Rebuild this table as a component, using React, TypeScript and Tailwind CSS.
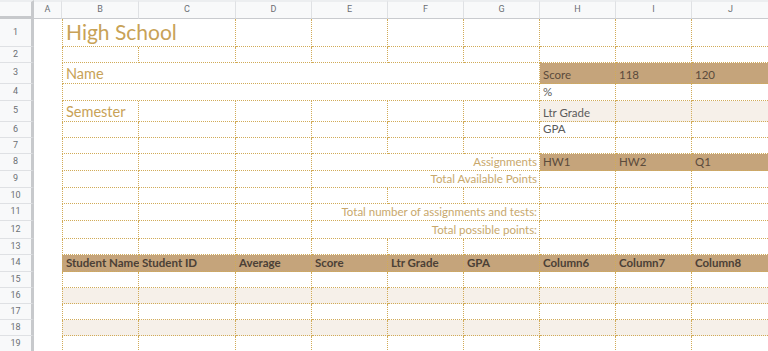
import React from 'react';

type Kind = 'title' | 'name' | 'dark' | 'right' | 'head' | 'plain';
type Cell = { span?: number; text?: string; kind?: Kind; bg?: 'tan' | 'beige' };

const empty = (n: number): Cell[] => Array.from({ length: n }, () => ({}));
const fill = (n: number, bg: 'tan' | 'beige'): Cell[] => Array.from({ length: n }, () => ({ bg }));

const rows: Cell[][] = [
  [{ span: 2, text: 'High School', kind: 'title' }, ...empty(7)],
  empty(9),
  [
    { span: 6, text: 'Name', kind: 'name' },
    { text: 'Score', kind: 'dark', bg: 'tan' },
    { text: '118', kind: 'dark', bg: 'tan' },
    { text: '120', kind: 'dark', bg: 'tan' },
  ],
  [{ span: 6 }, { text: '%', kind: 'plain' }, ...empty(2)],
  [
    { text: 'Semester', kind: 'name' },
    ...empty(5),
    { text: 'Ltr Grade', kind: 'plain', bg: 'beige' },
    ...fill(2, 'beige'),
  ],
  [...empty(6), { text: 'GPA', kind: 'plain' }, ...empty(2)],
  empty(9),
  [
    ...empty(3),
    { span: 3, text: 'Assignments', kind: 'right' },
    { text: 'HW1', kind: 'dark', bg: 'tan' },
    { text: 'HW2', kind: 'dark', bg: 'tan' },
    { text: 'Q1', kind: 'dark', bg: 'tan' },
  ],
  [...empty(3), { span: 3, text: 'Total Available Points', kind: 'right' }, ...empty(3)],
  empty(9),
  [...empty(3), { span: 3, text: 'Total number of assignments and tests:', kind: 'right' }, ...empty(3)],
  [...empty(3), { span: 3, text: 'Total possible points:', kind: 'right' }, ...empty(3)],
  empty(9),
  ['Student Name', 'Student ID', 'Average', 'Score', 'Ltr Grade', 'GPA', 'Column6', 'Column7', 'Column8'].map(
    t => ({ text: t, kind: 'head' as Kind, bg: 'tan' as const })
  ),
  empty(9),
  fill(9, 'beige'),
  empty(9),
  fill(9, 'beige'),
  empty(9),
];

const letters = ['A', 'B', 'C', 'D', 'E', 'F', 'G', 'H', 'I', 'J'];

const spanClass: Record<number, string> = {
  1: 'col-span-1',
  2: 'col-span-2',
  3: 'col-span-3',
  6: 'col-span-6',
};

const kindClass: Record<Kind, string> = {
  title: 'text-[21px] text-[#c8a257] pl-[3px] pb-[1px]',
  name: 'text-[14.5px] text-[#c8a257] pl-[3px]',
  dark: 'text-[11.5px] text-[#5b4b3b] pl-[3px] pb-[1px]',
  plain: 'text-[11.5px] text-[#5a5a5a] pl-[3px] pb-[1px]',
  right: 'text-[11.5px] text-[#c8a86c] justify-end pr-[2px] pb-[1px]',
  head: 'text-[11.5px] font-bold text-[#4b4036] pl-[3px] pb-[1px]',
};

const bgClass = { tan: 'bg-[#c5a47b]', beige: 'bg-[#f6f0e9]' };

function DataCell({ cell, first }: { cell: Cell; first: boolean }) {
  return (
    <div
      className={`flex items-end overflow-visible whitespace-nowrap leading-tight border-dotted border-[#d1ab58] border-r border-b
        ${first ? 'border-l' : ''}
        ${spanClass[cell.span ?? 1]}
        ${cell.bg ? bgClass[cell.bg] : 'bg-white'}
        ${cell.kind ? kindClass[cell.kind] : ''}`}
    >
      {cell.text}
    </div>
  );
}

export default function App() {
  return (
    <div className="w-[768px] h-[351px] overflow-hidden bg-white font-['Lato','Noto_Sans',sans-serif]">
      <div className="grid grid-cols-[34px_28px_77px_97px_76px_76px_76px_76px_76px_76px_78px] grid-rows-[19px_28px_16px_21px_17px_21px_16px_16px_17px_17px_16px_17px_18px_16px_17px_16px_16px_16px_16px_16px] w-[790px]">
        {/* Column headers */}
        <div className="bg-[#f8f9fa] border-t-2 border-t-[#eceef0] border-r-[3px] border-r-[#c7c9cc] border-b-[3px] border-b-[#c7c9cc]" />
        {letters.map(l => (
          <div
            key={l}
            className="bg-[#f8f9fa] border-t-2 border-t-[#eceef0] border-r border-r-[#dfe1e4] border-b border-b-[#c9cbcf] flex items-center justify-center text-[9px] text-[#6b6f74] font-['Roboto',sans-serif]"
          >
            {l}
          </div>
        ))}

        {rows.map((row, i) => (
          <React.Fragment key={i}>
            <div className="bg-[#f8f9fa] border-b border-b-[#dfe1e4] border-r-[3px] border-r-[#c7c9cc] flex items-center justify-center text-[9px] text-[#6b6f74] font-['Roboto',sans-serif]">
              {i + 1}
            </div>
            <div className="bg-white" />
            {row.map((cell, j) => (
              <DataCell key={j} cell={cell} first={j === 0} />
            ))}
          </React.Fragment>
        ))}
      </div>
    </div>
  );
}
